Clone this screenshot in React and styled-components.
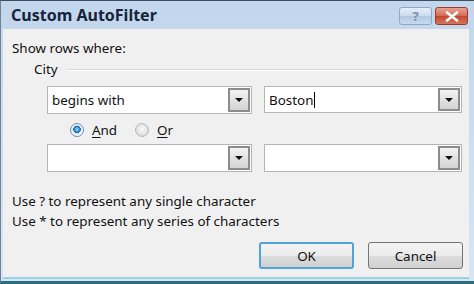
import React from 'react';
import styled, { createGlobalStyle } from 'styled-components';

const Global = createGlobalStyle`
    body {
        margin : 0;
        background : #f0f0f0;
    }
`;

const Window = styled.div`
    width : 474px;
    height : 284px;
    box-sizing : border-box;
    display : flex;
    flex-direction : column;
    background : linear-gradient(#c2d6ec, #d8e5f3);
    border-top : 1px solid #3d4e60;
    border-left : 1px solid #6f8296;
    border-bottom : 3px solid #2e6d7e;
    padding : 0 5px 2px 2px;
    font-family : "Noto Sans", "Open Sans", sans-serif;
    color : #111;
`;

const TitleBar = styled.div`
    height : 28px;
    display : flex;
    align-items : center;
    padding-left : 8px;
`;

const Title = styled.h1`
    margin : 0;
    font-size : 16px;
    font-weight : 700;
    color : #16233a;
`;

const CaptionButtons = styled.div`
    margin-left : auto;
    display : flex;
    gap : 3px;
    padding-top : 2px;
    padding-right : 1px;
`;

const CaptionButton = styled.div`
    width : 33px;
    height : 18px;
    border-radius : 3px;
    box-sizing : border-box;
    display : flex;
    align-items : center;
    justify-content : center;
    border : 1px solid ${({ close }) => close ? '#9a3a30' : '#8ea7c2'};
    background : ${({ close }) => close
        ? 'linear-gradient(#e8a393, #d46a55 50%, #c2462f 51%, #d4765c)'
        : 'linear-gradient(#e4eef8, #c9dbed 50%, #b2c9e2 51%, #c7daee)'};
    color : ${({ close }) => close ? '#fff' : '#7d8fa3'};
    font-weight : 700;
    font-size : 13px;
    line-height : 1;
`;

const Body = styled.div`
    flex : 1;
    background : #f0f0f0;
    border-bottom : 2px solid #94d4e4;
    padding : 11px 6px 0 9px;
    display : flex;
    flex-direction : column;
    font-size : 13.4px;
`;

const Label = styled.div`
    line-height : 17px;
`;

const GroupHead = styled.div`
    display : flex;
    align-items : center;
    gap : 9px;
    margin : 4px 0 0 22px;
    line-height : 17px;
    &::after{
        content : '';
        flex : 1;
        height : 1px;
        background : #d8d8d8;
        border-bottom : 1px solid #fff;
    }
`;

const ComboRow = styled.div`
    display : grid;
    grid-template-columns : 205px 198px;
    gap : 12px;
    margin-left : 35px;
    margin-top : ${({ top }) => top}px;
`;

const Combo = styled.div`
    height : ${({ h }) => h}px;
    box-sizing : border-box;
    border : 1px solid #b5b5b5;
    background : #fff;
    display : flex;
    align-items : stretch;
    padding : 1px;
`;

const ComboText = styled.div`
    flex : 1;
    display : flex;
    align-items : center;
    padding-left : 3px;
`;

const Caret = styled.span`
    display : inline-block;
    width : 1px;
    height : 16px;
    background : #000;
    margin-left : 1px;
`;

const DropButton = styled.div`
    width : 22px;
    box-sizing : border-box;
    border : 2px solid #8c8c8c;
    background : linear-gradient(#f4f4f4, #e2e2e2 50%, #d4d4d4);
    display : flex;
    align-items : center;
    justify-content : center;
    &::before{
        content : '';
        border-left : 4px solid transparent;
        border-right : 4px solid transparent;
        border-top : 4px solid #111;
    }
`;

const RadioRow = styled.div`
    display : flex;
    align-items : center;
    gap : 8px;
    margin : 8px 0 0 58px;
    height : 15px;
`;

const RadioLabel = styled.label`
    display : flex;
    align-items : center;
    gap : 8px;
    margin-right : 10px;
    & u{
        text-underline-offset : 2px;
    }
`;

const RadioDot = styled.span`
    width : 14px;
    height : 14px;
    border-radius : 50%;
    box-sizing : border-box;
    border : 1px solid ${({ on }) => on ? '#6c8cae' : '#b8b8b8'};
    background : radial-gradient(circle at 50% 45%, ${({ on }) => on
        ? '#9fe3ff 0, #2c8fd0 2.5px, #14609e 3.5px, #dfe8f0 4px, #f8f8f8 6px'
        : '#fafafa 0, #e4e4e4 5px, #d8d8d8 6px'});
`;

const Hints = styled.div`
    margin-top : 19px;
    line-height : 20px;
`;

const Buttons = styled.div`
    margin-top : auto;
    margin-bottom : 8px;
    display : flex;
    justify-content : flex-end;
    gap : 14px;
`;

const Button = styled.button`
    width : 95px;
    height : 27px;
    border-radius : 3px;
    font-family : inherit;
    font-size : 13.4px;
    color : #111;
    border : ${({ primary }) => primary ? '2px solid #4fa3d6' : '1px solid #757575'};
    background : linear-gradient(#f3f3f3, #ececec 50%, #dddddd 51%, #d0d0d0);
    padding : 0;
`;

const ComboBox = ({ h = 28, children }) => (
    <Combo h={h}>
        <ComboText>{children}</ComboText>
        <DropButton />
    </Combo>
);

const App = () => {
    return (
        <Window>
            <Global />
            <TitleBar>
                <Title>Custom AutoFilter</Title>
                <CaptionButtons>
                    <CaptionButton>?</CaptionButton>
                    <CaptionButton close>
                        <svg width="14" height="11" viewBox="0 0 14 11">
                            <path d="M2 1.5 L12 9.5 M12 1.5 L2 9.5" stroke="#fff" strokeWidth="2.6" strokeLinecap="round" />
                        </svg>
                    </CaptionButton>
                </CaptionButtons>
            </TitleBar>
            <Body>
                <Label>Show rows where:</Label>
                <GroupHead>City</GroupHead>
                <ComboRow top={8}>
                    <ComboBox>begins with</ComboBox>
                    <ComboBox h={27}>Boston<Caret /></ComboBox>
                </ComboRow>
                <RadioRow>
                    <RadioLabel><RadioDot on /> <span><u>A</u>nd</span></RadioLabel>
                    <RadioLabel><RadioDot /> <span><u>O</u>r</span></RadioLabel>
                </RadioRow>
                <ComboRow top={7}>
                    <ComboBox />
                    <ComboBox />
                </ComboRow>
                <Hints>
                    <div>Use ? to represent any single character</div>
                    <div>Use * to represent any series of characters</div>
                </Hints>
                <Buttons>
                    <Button primary>OK</Button>
                    <Button>Cancel</Button>
                </Buttons>
            </Body>
        </Window>
    );
};

export default App;
